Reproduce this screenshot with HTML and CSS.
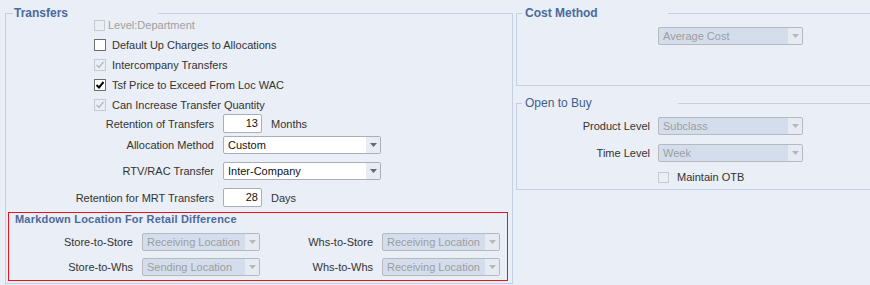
FILE: index.html
```html
<!DOCTYPE html>
<html>
<head>
<meta charset="utf-8">
<link rel="stylesheet" href="styles.css">
</head>
<body>
<div class="page">
  <section class="group transfers">
    <span class="legend">Transfers</span>
    <div class="checks">
      <div class="chk-row"><span class="cb dis small"></span><span class="gray">Level:Department</span></div>
      <div class="chk-row"><span class="cb"></span><span>Default Up Charges to Allocations</span></div>
      <div class="chk-row"><span class="cb dis"><svg width="10" height="10" viewBox="0 0 10 10"><path d="M1.5 5 L4 7.5 L8.5 2" fill="none" stroke="#b4b7bd" stroke-width="1.3"/></svg></span><span>Intercompany Transfers</span></div>
      <div class="chk-row"><span class="cb"><svg width="10" height="10" viewBox="0 0 10 10"><path d="M1.5 5 L4 7.5 L8.5 2" fill="none" stroke="#000" stroke-width="2"/></svg></span><span>Tsf Price to Exceed From Loc WAC</span></div>
      <div class="chk-row"><span class="cb dis"><svg width="10" height="10" viewBox="0 0 10 10"><path d="M1.5 5 L4 7.5 L8.5 2" fill="none" stroke="#b4b7bd" stroke-width="1.3"/></svg></span><span>Can Increase Transfer Quantity</span></div>
    </div>
    <div class="frow r-ret">
      <span class="flabel">Retention of Transfers</span>
      <span class="inp">13</span>
      <span class="unit">Months</span>
    </div>
    <div class="frow r-alloc">
      <span class="flabel">Allocation Method</span>
      <div class="sel w-wide"><span class="sel-text">Custom</span><span class="sel-btn"><svg width="7" height="4" viewBox="0 0 7 4"><polygon points="0,0 7,0 3.5,4" fill="#666878"/></svg></span></div>
    </div>
    <div class="frow r-rtv">
      <span class="flabel">RTV/RAC Transfer</span>
      <div class="sel w-wide"><span class="sel-text">Inter-Company</span><span class="sel-btn"><svg width="7" height="4" viewBox="0 0 7 4"><polygon points="0,0 7,0 3.5,4" fill="#666878"/></svg></span></div>
    </div>
    <div class="frow r-mrt">
      <span class="flabel">Retention for MRT Transfers</span>
      <span class="inp">28</span>
      <span class="unit">Days</span>
    </div>
    <div class="mkd">
      <div class="mkd-title">Markdown Location For Retail Difference</div>
      <div class="mkd-grid">
        <span class="lab">Store-to-Store</span>
        <div class="sel dis"><span class="sel-text">Receiving Location</span><span class="sel-btn"><svg width="7" height="4" viewBox="0 0 7 4"><polygon points="0,0 7,0 3.5,4" fill="#b3b6bc"/></svg></span></div>
        <span class="lab">Whs-to-Store</span>
        <div class="sel dis"><span class="sel-text">Receiving Location</span><span class="sel-btn"><svg width="7" height="4" viewBox="0 0 7 4"><polygon points="0,0 7,0 3.5,4" fill="#b3b6bc"/></svg></span></div>
        <span class="lab">Store-to-Whs</span>
        <div class="sel dis"><span class="sel-text">Sending Location</span><span class="sel-btn"><svg width="7" height="4" viewBox="0 0 7 4"><polygon points="0,0 7,0 3.5,4" fill="#b3b6bc"/></svg></span></div>
        <span class="lab">Whs-to-Whs</span>
        <div class="sel dis"><span class="sel-text">Receiving Location</span><span class="sel-btn"><svg width="7" height="4" viewBox="0 0 7 4"><polygon points="0,0 7,0 3.5,4" fill="#b3b6bc"/></svg></span></div>
      </div>
    </div>
  </section>
  <div class="right">
    <section class="group cost">
      <span class="legend">Cost Method</span>
      <div class="orow">
        <div class="sel dis w-right cost-sel"><span class="sel-text">Average Cost</span><span class="sel-btn"><svg width="7" height="4" viewBox="0 0 7 4"><polygon points="0,0 7,0 3.5,4" fill="#b3b6bc"/></svg></span></div>
      </div>
    </section>
    <section class="group otb">
      <span class="legend">Open to Buy</span>
      <div class="orow">
        <span class="olabel">Product Level</span>
        <div class="sel dis w-right"><span class="sel-text">Subclass</span><span class="sel-btn"><svg width="7" height="4" viewBox="0 0 7 4"><polygon points="0,0 7,0 3.5,4" fill="#b3b6bc"/></svg></span></div>
      </div>
      <div class="orow r-time">
        <span class="olabel">Time Level</span>
        <div class="sel dis w-right"><span class="sel-text">Week</span><span class="sel-btn"><svg width="7" height="4" viewBox="0 0 7 4"><polygon points="0,0 7,0 3.5,4" fill="#b3b6bc"/></svg></span></div>
      </div>
      <div class="otb-chk">
        <span class="cb dis small"></span><span>Maintain OTB</span>
      </div>
    </section>
  </div>
</div>
</body>
</html>
```

FILE: styles.css
```css
* { box-sizing: border-box; }
html, body { margin: 0; padding: 0; }
body {
  background: #eaeef6;
  font-family: "Liberation Sans", Arial, sans-serif;
  font-size: 11px;
  color: #333;
  width: 870px;
  height: 285px;
  overflow: hidden;
}
.page { display: flex; gap: 3px; padding: 13px 0 0 5px; }

.group { position: relative; border: 1px solid #c4d0e2; flex: none; }
.legend {
  position: absolute;
  top: -7px;
  height: 13px;
  line-height: 13px;
  background: #eaeef6;
  font-size: 12px;
  font-weight: bold;
  color: #4a6a9c;
  white-space: nowrap;
}
.transfers { width: 508px; height: 271px; }
.transfers > .legend { left: 7px; width: 145px; padding-left: 1px; }

.right { display: flex; flex-direction: column; gap: 17px; flex: none; width: 354px; }
.cost { height: 73px; padding-top: 13px; border-right: none; }
.cost > .legend { left: 5px; width: 146px; padding-left: 3px; }
.otb { height: 87px; padding-top: 13px; border-right: none; }
.otb > .legend { left: 5px; width: 156px; padding-left: 3px; font-weight: normal; color: #3f5f90; }

/* checkboxes */
.checks { padding-top: 1px; }
.chk-row { height: 20px; display: flex; align-items: center; padding-left: 88px; white-space: nowrap; }
.cb {
  width: 12px; height: 12px;
  border: 1px solid #6e6e6e;
  background: #fff;
  margin-right: 6px;
  flex: none;
  display: flex; align-items: center; justify-content: center;
}
.cb svg { display: block; }
.cb.dis { border-color: #c6c9cf; background: transparent; }
.cb.small { width: 11px; height: 11px; margin-right: 3px; }
.gray { color: #a0a0a0; }

/* form rows */
.frow { display: flex; align-items: center; white-space: nowrap; }
.flabel { width: 208px; text-align: right; margin-right: 9px; flex: none; }
.r-ret { height: 19px; margin-top: -1px; }
.r-alloc { height: 18px; margin-top: 3px; }
.r-rtv { height: 18px; margin-top: 8px; }
.r-mrt { height: 19px; margin-top: 8px; }

.inp {
  width: 39px; height: 19px;
  border: 1px solid #a9afb8;
  border-radius: 2px;
  background: #fff;
  text-align: right;
  padding-right: 3px;
  line-height: 17px;
  color: #111;
  flex: none;
}
.unit { margin-left: 9px; }

.sel {
  display: flex;
  height: 18px;
  border: 1px solid #a9afb8;
  border-radius: 2px;
  background: #fff;
  overflow: hidden;
  flex: none;
}
.sel-text { flex: 1; padding-left: 4px; line-height: 17px; color: #111; white-space: nowrap; overflow: hidden; }
.sel-btn { width: 14px; flex: none; background: #e9ecf3; display: flex; align-items: center; justify-content: center; }
.sel.dis { background: #d4ddec; border-color: #b6b9be; }
.sel.dis .sel-text { color: #9d9d9d; }
.sel.dis .sel-btn { background: #e6eaf2; }
.w-wide { width: 158px; }
.w-right { width: 145px; }

/* markdown box */
.mkd { margin: 5px 0 0 2px; width: 500px; height: 69px; border: 1px solid #e8141c; }
.mkd-title { font-weight: bold; color: #4a6a9c; line-height: 13px; padding-left: 6px; letter-spacing: 0.2px; white-space: nowrap; }
.mkd-grid {
  display: grid;
  grid-template-columns: 124px 118px 104px 118px;
  grid-auto-rows: 18px;
  column-gap: 9px;
  row-gap: 7px;
  margin-top: 7px;
  align-items: center;
}
.mkd-grid .lab { text-align: right; white-space: nowrap; }

/* right column */
.orow { display: flex; align-items: center; height: 18px; white-space: nowrap; }
.olabel { width: 133px; margin-right: 8px; text-align: right; flex: none; }
.cost-sel { margin-left: 141px; }
.r-time { margin-top: 9px; }
.otb-chk { display: flex; align-items: center; height: 12px; margin-top: 9px; padding-left: 141px; white-space: nowrap; }
.otb-chk .cb { margin-right: 8px; }
```
